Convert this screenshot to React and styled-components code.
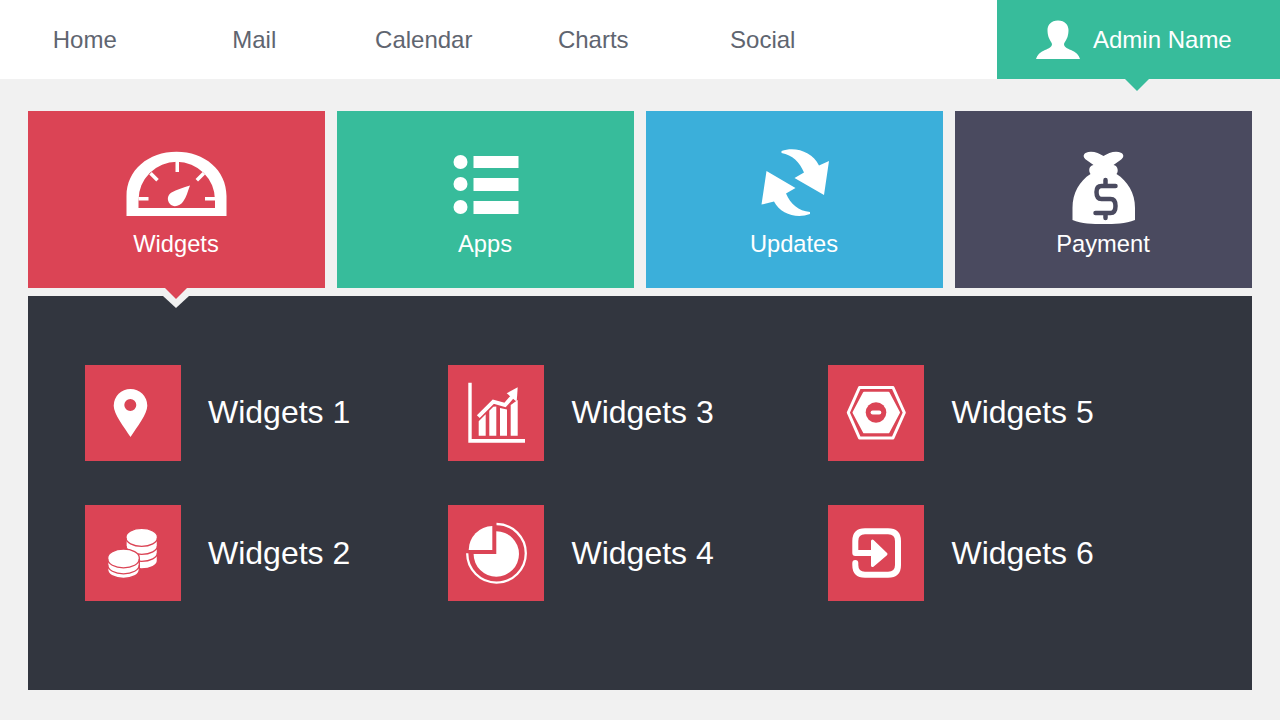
import styled, { createGlobalStyle } from "styled-components";

const RED = "#db4455";
const GREEN = "#37bc9b";
const BLUE = "#3bafda";
const SLATE = "#4a4a5f";
const DARK = "#32363f";
const PAGE = "#f1f1f1";

const GaugeIcon = () => (
  <TileSvg viewBox="116.5 140 120 88">
    <path
      fillRule="evenodd"
      d="M126 216V196C126 170 148 151.700 176 151.700C204 151.700 226 170 226 196V216ZM138 208H214.500V200A38 38 0 0 0 138 200Z"
    />
    <path d="M175 161h3.500v11h-3.500zM138 197h10v3.500h-10zM204.500 197h10v3.500h-10z" />
    <path d="M150 173.300l7 7" stroke="#fff" strokeWidth="3.500" />
    <path d="M203.300 173.300l-7 7" stroke="#fff" strokeWidth="3.500" />
    <path d="M189.500 185.500C187 192 186 197 183 201C180 206 173 208 169.500 204C166 200 167 195 171 192.500C176 189.500 183 187.500 189.500 185.500Z" />
  </TileSvg>
);

const ListIcon = () => (
  <TileSvg viewBox="425.5 140 120 88">
    <circle cx="460" cy="162" r="7" />
    <circle cx="460" cy="184" r="7" />
    <circle cx="460" cy="207" r="7" />
    <rect x="473" y="156" width="45" height="12" />
    <rect x="473" y="178" width="45" height="13" />
    <rect x="473" y="201" width="45" height="13" />
  </TileSvg>
);

const SyncIcon = () => (
  <TileSvg viewBox="734.5 140 120 88">
    <path d="M781 151C795 146 812 152 818.5 165.5L828.5 161L823.5 195L794 178L803.5 172.5C799 162 792 155 781 153Z" />
    <path d="M809.5 214C796 219 780 214 773.5 201.5L761 204.5L766 171L795 188L785.5 193.5C790 204 798 211 809.5 212Z" />
  </TileSvg>
);

const BagIcon = () => (
  <TileSvg viewBox="1043.5 140 120 88">
    <path d="M1085 153C1091 150 1098 153 1103 156C1108 153 1115 150 1121 153C1124 155 1123 158 1120 160L1113 165C1118 166 1118 172 1116 174C1127 181 1134.500 193 1134.500 208V220C1125 224 1114 224 1103 224C1092 224 1081 224 1072 220V208C1072 193 1079 181 1090 174C1088 171 1088 166 1093 165L1086 160C1083 158 1082 155 1085 153Z" />
    <path
      d="M1115 186H1101Q1096 186 1096 192Q1096 199 1101 199H1110Q1115 199 1115 206Q1115 213 1110 213H1095M1105 180V186M1105 213V218"
      fill="none"
      stroke={SLATE}
      strokeWidth="4.500"
      strokeLinecap="round"
    />
  </TileSvg>
);

const UserIcon = () => (
  <svg width="44" height="39" viewBox="1036 18 44 39" fill="#fff">
    <path d="M1058 18.5C1065 18.5 1068.500 23 1068.500 28C1068.500 31 1068 33 1067.500 35C1066.500 38 1064.500 40 1064 42C1064 45 1067 46.500 1071 48C1076 50 1079 53 1080 57H1036C1037 53 1040 50 1045 48C1049 46.500 1052 45 1052 42C1051.500 40 1049.500 38 1048.500 35C1048 33 1047.500 31 1047.500 28C1047.500 23 1051 18.500 1058 18.500Z" />
  </svg>
);

const PinIcon = () => (
  <ItemSvg viewBox="85 365 96 96">
    <path
      fillRule="evenodd"
      d="M130.500 389A16.700 16.700 0 0 1 147.300 405.700C147.300 414 137 427 130.500 437C124 427 113.700 414 113.700 405.700A16.700 16.700 0 0 1 130.500 389ZM130.300 399A6 6 0 1 0 130.300 411A6 6 0 1 0 130.300 399Z"
    />
  </ItemSvg>
);

const coinStack = (cx, top, rx, ry, bottom, lines) => (
  <>
    <path
      d={`M${cx - rx} ${top}A${rx} ${ry} 0 0 1 ${cx + rx} ${top}V${bottom - ry}A${rx} ${ry} 0 0 1 ${cx - rx} ${bottom - ry}Z`}
      stroke={RED}
      strokeWidth="1.300"
    />
    {lines.map((y) => (
      <path
        key={y}
        d={`M${cx - rx} ${y}A${rx} ${ry} 0 0 0 ${cx + rx} ${y}`}
        fill="none"
        stroke={RED}
        strokeWidth="1.300"
      />
    ))}
  </>
);

const CoinsIcon = () => (
  <ItemSvg viewBox="85 505 96 96">
    {coinStack(141.700, 536.700, 15.700, 8.300, 569, [538, 546, 553])}
    {coinStack(123.500, 557.800, 15.800, 8.800, 578.500, [559, 565])}
  </ItemSvg>
);

const ChartIcon = () => (
  <ItemSvg viewBox="448 365 96 96">
    <path d="M468.300 382.700h3.400v56.300H525v3.700h-56.700z" />
    <path d="M478.700 421.300L485.700 414.300V435.700H478.700ZM489.300 410.700L493.300 406.700L496.300 406.500V435.700H489.300ZM500 408L507 409.500V435.700H500ZM510.700 405L517.700 400V435.700H510.700Z" />
    <path d="M478.300 416.700L493.300 401.700L505 405L513 396" fill="none" stroke="#fff" strokeWidth="4" />
    <path d="M506.700 393.300L517.700 387.300L516.700 401.700Z" />
  </ItemSvg>
);

const PieIcon = () => (
  <ItemSvg viewBox="448 505 96 96">
    <path d="M496.300 554V531.300A22.700 22.700 0 1 1 473.600 554Z" />
    <path d="M492.300 550H468.700A24 24 0 0 1 492.300 526Z" />
    <path
      d="M496.500 524A29.300 29.300 0 1 1 467.200 553.300"
      fill="none"
      stroke="#fff"
      strokeWidth="2.300"
    />
  </ItemSvg>
);

const HexIcon = () => (
  <ItemSvg viewBox="828 365 96 96">
    <path
      d="M859.500 387.500H893L904.300 412.700L893 438H859.500L848.300 412.700Z"
      fill="none"
      stroke="#fff"
      strokeWidth="3"
      strokeLinejoin="round"
    />
    <path
      d="M864 392.700H888.500L899 412.500L888.500 432.300H864L853.500 412.500Z"
      stroke="#fff"
      strokeWidth="2"
      strokeLinejoin="round"
    />
    <circle cx="876" cy="412.500" r="10.300" fill={RED} />
    <rect x="870.600" y="410.500" width="10.700" height="4" rx="2" />
  </ItemSvg>
);

const ExitIcon = () => (
  <ItemSvg viewBox="828 505 96 96">
    <path
      d="M871 553H855.300V541Q855.300 531.300 865 531.300H888Q898 531.300 898 541V565Q898 574.700 888 574.700H865Q855.300 574.700 855.300 565V563"
      fill="none"
      stroke="#fff"
      strokeWidth="6"
      strokeLinecap="round"
      strokeLinejoin="round"
    />
    <path
      d="M872.500 541L886 554L872.500 565.500Z"
      stroke="#fff"
      strokeWidth="3"
      strokeLinejoin="round"
    />
  </ItemSvg>
);

const navItems = ["Home", "Mail", "Calendar", "Charts", "Social"];

const tiles = [
  { label: "Widgets", color: RED, Icon: GaugeIcon, active: true },
  { label: "Apps", color: GREEN, Icon: ListIcon },
  { label: "Updates", color: BLUE, Icon: SyncIcon },
  { label: "Payment", color: SLATE, Icon: BagIcon },
];

// grid fills by column: 1/2, 3/4, 5/6
const widgets = [
  { label: "Widgets 1", Icon: PinIcon },
  { label: "Widgets 2", Icon: CoinsIcon },
  { label: "Widgets 3", Icon: ChartIcon },
  { label: "Widgets 4", Icon: PieIcon },
  { label: "Widgets 5", Icon: HexIcon },
  { label: "Widgets 6", Icon: ExitIcon },
];

export default function App() {
  return (
    <>
      <GlobalStyle />
      <TopBar>
        <Nav>
          {navItems.map((item) => (
            <NavItem key={item}>{item}</NavItem>
          ))}
        </Nav>
        <Admin>
          <UserIcon />
          <span>Admin Name</span>
        </Admin>
      </TopBar>
      <Main>
        <Tiles>
          {tiles.map(({ label, color, Icon, active }) => (
            <Tile key={label} $color={color}>
              <Icon />
              <TileLabel>{label}</TileLabel>
              {active && <TileNotch />}
            </Tile>
          ))}
        </Tiles>
        <Panel>
          {widgets.map(({ label, Icon }) => (
            <Item key={label}>
              <ItemIcon>
                <Icon />
              </ItemIcon>
              <ItemLabel>{label}</ItemLabel>
            </Item>
          ))}
        </Panel>
      </Main>
    </>
  );
}

const GlobalStyle = createGlobalStyle`
  html, body {
    margin: 0;
    height: 720px;
    overflow: hidden;
    background: ${PAGE};
    font-family: "Liberation Sans", Arial, sans-serif;
  }
`;

const TopBar = styled.header`
  display: flex;
  justify-content: space-between;
  height: 79px;
  background: #fff;
`;

const Nav = styled.nav`
  display: flex;
  align-items: center;
`;

const NavItem = styled.a`
  width: 169.5px;
  text-align: center;
  color: #5f6570;
  font-size: 24px;
`;

const Admin = styled.div`
  position: relative;
  display: flex;
  align-items: center;
  gap: 13px;
  width: 283px;
  box-sizing: border-box;
  padding: 0 0 0 39px;
  background: ${GREEN};
  color: #fff;
  font-size: 24px;

  &::after {
    content: "";
    position: absolute;
    top: 79px;
    left: 128px;
    border-top: 12px solid ${GREEN};
    border-left: 12.5px solid transparent;
    border-right: 12.5px solid transparent;
  }
`;

const Main = styled.main`
  padding: 32px 28px 0;
`;

const Tiles = styled.div`
  display: grid;
  grid-template-columns: repeat(4, 297px);
  gap: 12px;
`;

const Tile = styled.div`
  position: relative;
  display: flex;
  flex-direction: column;
  align-items: center;
  gap: 2px;
  height: 177px;
  box-sizing: border-box;
  padding-top: 29px;
  background: ${(props) => props.$color};
`;

// light chevron cut into the panel, with the tile colour pointing into it
const TileNotch = styled.span`
  position: absolute;
  z-index: 1;
  top: 185px;
  left: 135px;
  border-top: 12px solid ${PAGE};
  border-left: 13.5px solid transparent;
  border-right: 13.5px solid transparent;

  &::after {
    content: "";
    position: absolute;
    top: -20px;
    left: -11px;
    border-top: 11px solid ${RED};
    border-left: 11px solid transparent;
    border-right: 11px solid transparent;
  }
`;

const TileSvg = styled.svg`
  display: block;
  width: 120px;
  height: 88px;
  fill: #fff;
`;

const TileLabel = styled.div`
  margin-right: 1px;
  color: #fff;
  font-size: 23.7px;
  line-height: 28px;
`;

const Panel = styled.section`
  display: grid;
  grid-template-columns: 363px 380px 1fr;
  grid-template-rows: 96px 96px;
  grid-auto-flow: column;
  row-gap: 44px;
  height: 394px;
  margin-top: 8px;
  box-sizing: border-box;
  padding: 69px 0 0 57px;
  background: ${DARK};
`;

const Item = styled.div`
  display: flex;
  align-items: center;
  gap: 27px;

  &:nth-child(n + 3) {
    gap: 27.5px;
  }

  &:nth-child(odd) > div:last-child {
    padding-bottom: 2px;
  }
`;

const ItemIcon = styled.div`
  width: 96px;
  height: 96px;
  background: ${RED};
`;

const ItemSvg = styled.svg`
  display: block;
  width: 96px;
  height: 96px;
  fill: #fff;
`;

const ItemLabel = styled.div`
  color: #fff;
  font-size: 32px;
`;
